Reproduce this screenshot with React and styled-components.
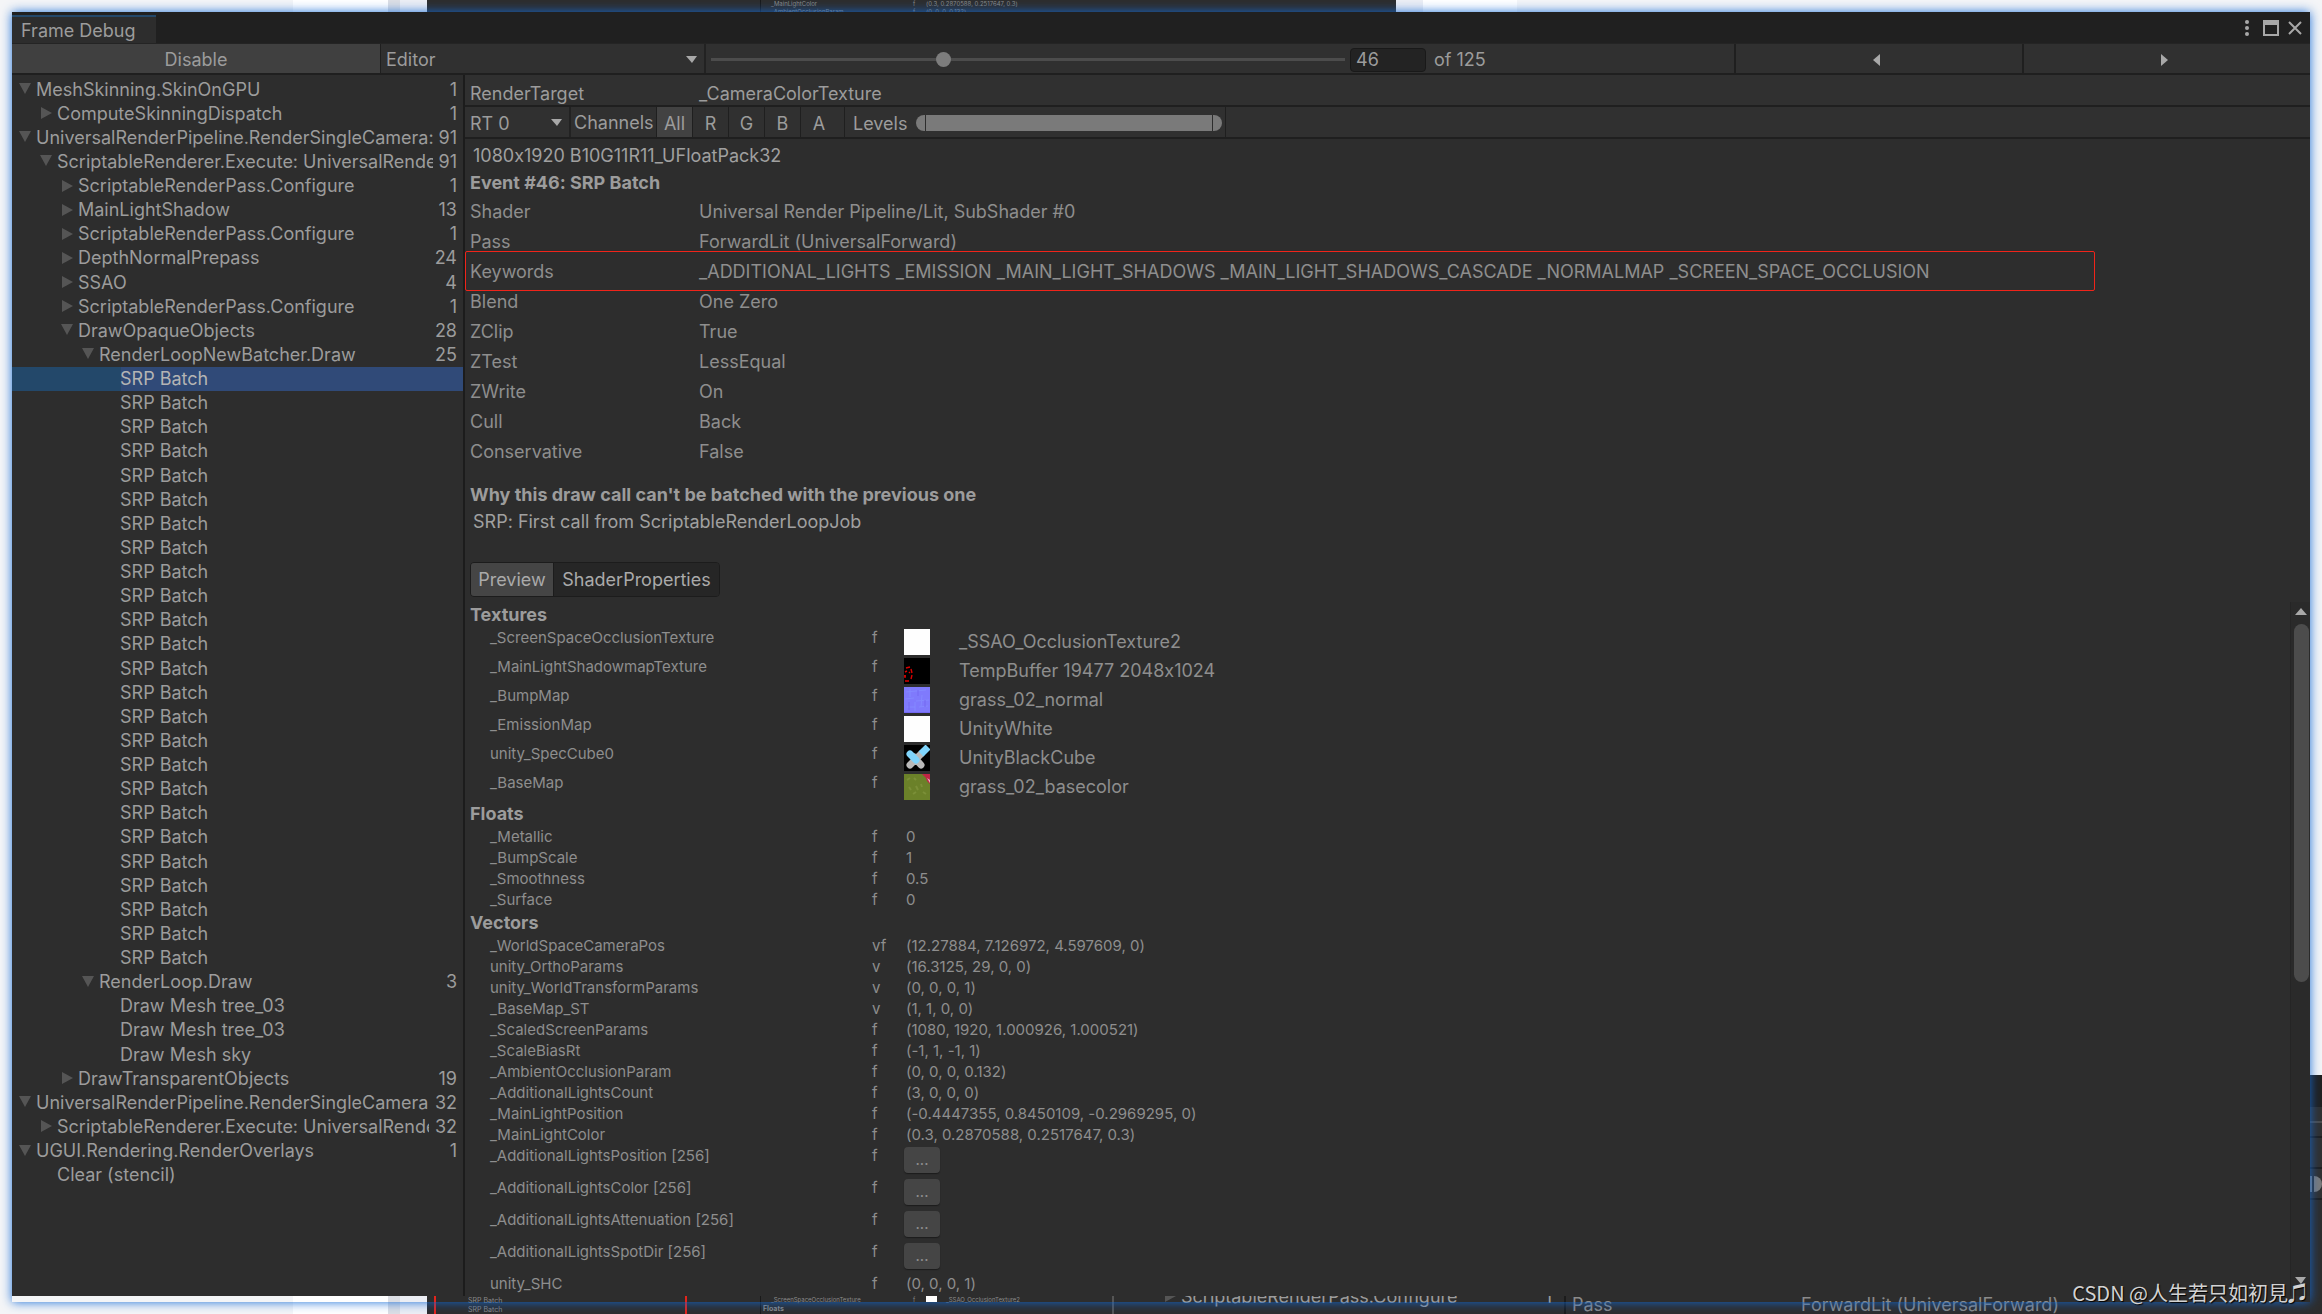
import React from "react";
import styled, { createGlobalStyle } from "styled-components";

const GlobalStyle = createGlobalStyle`
  * {
    box-sizing: border-box;
  }
  body {
    margin: 0;
    background-color: #f4f5f7;
    color: #9c9c9c;
    font-family: Inter, "Liberation Sans", sans-serif;
    font-size: 18px;
    font-feature-settings: "calt" 0;
  }
  button, input, select {
    font: inherit;
    font-feature-settings: inherit;
    color: inherit;
    border: none;
    border-radius: 0;
    padding: 0;
    margin: 0;
    outline: none;
  }
`;

const Page = styled.div`
  position: relative;
  min-height: 100vh;
  padding: 12px 12px 18px;
  overflow: hidden;
`;

/* ---- what lies behind the window ---- */

const Backdrop = styled.div`
  position: absolute;
  inset: 0;
  display: flex;
`;
const Stripe = styled.div`
  width: ${(p) => p.$width}px;
  background-color: ${(p) => p.$color};
`;
const BackWindow = styled.div`
  display: flex;
  flex-direction: column;
  justify-content: space-between;
  width: 969px;
  background-color: #2d2d2d;
  color: #8a8a8a;
  font-size: 7px;
  line-height: 9px;
`;
const BackStrip = styled.div`
  display: flex;
  height: 18px;
  overflow: hidden;
`;
const BackTree = styled.div`
  width: 334px;
  padding-left: 7px;
  border-right: 1px solid #191919;
`;
const BackHighlight = styled.div`
  width: 253px;
  height: 18px;
  padding-left: 32px;
  border: solid #e3241c;
  border-width: 0 2px;
`;
const BackProps = styled.div`
  padding-left: 2px;
`;
const BackRow = styled.div`
  display: grid;
  grid-template-columns: 142px 13px 20px auto;
  height: 8px;
  padding-left: 8px;
  font-size: 6px;
  line-height: 8px;
  white-space: nowrap;
`;
const BackSwatch = styled.i`
  width: 11px;
  height: 6px;
  background-color: #fff;
`;
const FrontWindow = styled.div`
  position: absolute;
  left: 1112px;
  right: 0;
  top: 1075px;
  bottom: 0;
  overflow: hidden;
  border-left: 2px solid #555;
  background-color: #2d2d2d;
  color: #8a8a8a;
`;
const FrontTitle = styled.div`
  height: 32px;
  background-color: #202020;
`;
const FrontBar = styled.div`
  display: flex;
  justify-content: flex-end;
  align-items: center;
  gap: 2px;
  height: 31px;
  background-color: #303030;
  border-bottom: 2px solid #1f1f1f;
`;
const FrontTrack = styled.div`
  width: 40px;
  height: 2px;
  background-color: #4c4c4c;
`;
const FrontLevel = styled.div`
  width: ${(p) => (p.$cap ? 8 : 40)}px;
  height: 16px;
  border-radius: ${(p) => (p.$cap ? "0 8px 8px 0" : "0")};
  background-color: #7a7a7a;
`;
const FrontBody = styled.div`
  display: grid;
  grid-template-columns: 452px 1fr;
`;
const FrontTree = styled.div`
  padding: 84px 6px 0 50px;
  border-right: 2px solid #1c1c1c;
`;
const FrontDetails = styled.div`
  display: grid;
  grid-template-columns: 229px auto;
  padding: 90px 0 0 6px;
  line-height: 30px;
`;

/* ---- the window ---- */

const Window = styled.div`
  position: relative;
  display: flex;
  flex-direction: column;
  min-height: calc(100vh - 30px);
  background-color: #2d2d2d;

  &::after {
    content: "";
    position: absolute;
    inset: 0 0 -6px;
    box-shadow: 0 0 10px rgba(18, 104, 214, 0.95);
    pointer-events: none;
  }
`;
const TitleBar = styled.div`
  display: flex;
  justify-content: space-between;
  align-items: flex-end;
  height: 31px;
  background-color: #202020;
`;
const Tab = styled.div`
  width: 144px;
  height: 28px;
  padding-left: 9px;
  line-height: 28px;
  border-top: 2px solid #23486a;
  background-color: #2d2d2d;
`;
const WindowButtons = styled.div`
  display: flex;
  align-items: center;
  gap: 4px;
  height: 31px;
  padding-right: 5px;
`;
const IconButton = styled.button`
  display: flex;
  align-items: center;
  justify-content: center;
  width: 20px;
  height: 20px;
  background: none;
`;
const Toolbar = styled.div`
  display: flex;
  height: 32px;
  background-color: #303030;
  border-top: 1px solid #242424;
  border-bottom: 2px solid #1f1f1f;
`;
const DisableButton = styled.button`
  width: 369px;
  padding-top: 2px;
  background-color: #404040;
  border-right: 1px solid #1f1f1f;
`;
const SelectBox = styled.div`
  position: relative;
  width: ${(p) => p.$width}px;
  border-right: 2px solid #222;

  svg {
    position: absolute;
    right: ${(p) => p.$arrow}px;
    top: 12px;
    pointer-events: none;
  }
`;
const Select = styled.select`
  appearance: none;
  width: 100%;
  height: 100%;
  padding: 2px 0 0 5px;
  background-color: transparent;
`;
const SliderGroup = styled.div`
  display: flex;
  align-items: center;
  flex: 1;
  padding: 2px 0 0 5px;
`;
const Slider = styled.input`
  appearance: none;
  flex: 1;
  height: 16px;
  background: none;

  &::-webkit-slider-runnable-track {
    height: 3px;
    background-color: #4c4c4c;
  }
  &::-webkit-slider-thumb {
    appearance: none;
    width: 15px;
    height: 15px;
    margin-top: -6px;
    border-radius: 50%;
    background-color: #7d7d7d;
  }
`;
const FrameInput = styled.input`
  width: 76px;
  height: 24px;
  margin-left: 5px;
  padding-left: 5px;
  border: 1px solid #191919;
  border-radius: 4px;
  background-color: #232323;
`;
const FrameCount = styled.span`
  width: 308px;
  padding-left: 8px;
`;
const StepButton = styled.button`
  width: 288px;
  padding-top: 2px;
  background: none;
  border-left: 2px solid #1f1f1f;
`;

const Body = styled.div`
  display: flex;
  flex: 1;
`;

const Tree = styled.ul`
  display: flex;
  flex-direction: column;
  justify-content: space-between;
  width: 453px;
  margin: 0;
  padding: 2px 0 109px;
  border-right: 2px solid #1c1c1c;
  list-style: none;
`;
const TreeRow = styled.li`
  display: flex;
  align-items: center;
  height: 24px;
  padding-right: 6px;
  padding-left: ${(p) => 7 + p.$level * 21}px;
  white-space: nowrap;
  color: ${(p) => (p.$selected ? "#b4b4b4" : "#9c9c9c")};
  background: ${(p) =>
    p.$selected
      ? "linear-gradient(to right, #23486a 109px, #304a78 109px)"
      : "none"};
`;
const Toggle = styled.span`
  display: flex;
  flex: none;
  width: 17px;
`;
const TreeName = styled.span`
  flex: 1;
  min-width: 0;
  overflow: hidden;
`;
const TreeCount = styled.span`
  padding-left: 6px;
`;

const Main = styled.div`
  flex: 1;
  min-width: 0;
  display: flex;
  flex-direction: column;
`;
const TargetBar = styled.div`
  display: grid;
  grid-template-columns: 229px auto;
  align-items: center;
  height: 32px;
  padding: 6px 0 0 5px;
  background-color: #303030;
  border-bottom: 2px solid #1f1f1f;
`;
const ChannelBar = styled.div`
  display: flex;
  height: 32px;
  background-color: #303030;
  border-bottom: 2px solid #1f1f1f;
`;
const ChannelLabel = styled.span`
  width: 86px;
  padding-left: 3px;
  line-height: 32px;
  border-right: 1px solid #1f1f1f;
`;
const ChannelButton = styled.button`
  width: 36px;
  padding-top: 2px;
  background-color: ${(p) => (p.$active ? "#424242" : "transparent")};
  border-right: ${(p) => (p.$last ? "none" : "1px solid #1f1f1f")};
`;
const Levels = styled.div`
  display: flex;
  align-items: center;
  width: 382px;
  margin-left: 7px;
  padding: 2px 3px 0 8px;
  border: solid #1f1f1f;
  border-width: 0 1px;
`;
const LevelsLabel = styled.span`
  width: 63px;
`;
const LevelRange = styled.input`
  appearance: none;
  flex: 1;
  min-width: 0;
  height: 16px;
  background-color: #7a7a7a;
  border-radius: ${(p) => (p.$high ? "0 8px 8px 0" : "8px 0 0 8px")};

  &::-webkit-slider-thumb {
    appearance: none;
    width: 10px;
    height: 16px;
    border: solid #2d2d2d;
    border-width: ${(p) => (p.$high ? "0 0 0 1px" : "0 1px 0 0")};
  }
`;

const Details = styled.div`
  padding: 3px 0 0;
`;
const Line = styled.p`
  margin: 0;
  padding-left: 8px;
  line-height: ${(p) => p.$height}px;
  color: #a0a0a0;
`;
const Heading = styled.h2`
  margin: 0;
  padding-left: 5px;
  font-size: 18px;
  font-weight: 700;
  line-height: ${(p) => p.$height}px;
`;
const StateList = styled.dl`
  margin: 1px 0 14px;
`;
const StateRow = styled.div`
  position: relative;
  display: grid;
  grid-template-columns: 229px auto;
  padding-left: 5px;
  line-height: 30px;
  color: #8e8e8e;

  dd {
    margin: 0;
  }
`;
const RedBox = styled.div`
  position: absolute;
  inset: -6px auto -4px 0;
  width: 1630px;
  max-width: 100%;
  border: 1px solid #f0241a;
  border-radius: 2px;
`;
const Tabs = styled.div`
  display: flex;
  width: 250px;
  height: 35px;
  margin: 27px 0 5px 5px;
  border: 1px solid #1c1c1c;
  border-radius: 4px;
  overflow: hidden;
`;
const TabButton = styled.button`
  width: ${(p) => p.$width}px;
  color: #aaa;
  background-color: ${(p) => (p.$raised ? "#454545" : "#262626")};
  border-right: ${(p) => (p.$raised ? "1px solid #1c1c1c" : "none")};
`;

const Scroll = styled.div`
  display: flex;
  flex: 1;
`;
const Properties = styled.div`
  flex: 1;
`;
const Table = styled.table`
  width: 100%;
  table-layout: fixed;
  border-collapse: collapse;
  font-size: 15px;
  line-height: 21px;
  color: #8e8e8e;

  th, td {
    padding: 0;
    font-weight: 400;
    text-align: left;
    vertical-align: top;
  }
  th {
    width: 407px;
    padding-left: 25px;
  }
  td.stage {
    width: 32px;
  }
`;
const Row = styled.tr`
  height: ${(p) => p.$height}px;
`;
const Value = styled.span`
  padding-left: 2px;
`;
const TextureValue = styled.div`
  display: flex;
  align-items: center;
  gap: 29px;
  height: 29px;
  font-size: 18px;

  svg {
    flex: none;
  }
`;
const MoreButton = styled.button`
  display: block;
  width: 36px;
  height: 26px;
  margin-top: 2px;
  line-height: 26px;
  border-radius: 4px;
  background-color: #454545;
  box-shadow: 0 1px 1px #1c1c1c;
`;
const ScrollBar = styled.div`
  display: flex;
  flex-direction: column;
  align-items: center;
  width: 20px;
  padding: 6px 0 7px 1px;
  background-color: #2a2a2a;
  border-left: 1px solid #252525;
`;
const ScrollThumb = styled.div`
  width: 15px;
  height: 358px;
  margin: 4px 0 auto;
  border-radius: 8px;
  background-color: #4c4c4c;
`;
const Watermark = styled.div`
  position: absolute;
  right: 14px;
  bottom: 6px;
  color: #d2d2d2;
  font-family: "Noto Sans CJK SC", sans-serif;
  font-size: 20px;
  line-height: 30px;
  text-shadow: 1px 1px 1px #000;
`;

const srpBatches = Array.from({ length: 25 }, (_, i) => ({
  level: 4,
  name: "SRP Batch",
  selected: i === 0,
}));

const tree = [
  { level: 0, name: "MeshSkinning.SkinOnGPU", count: 1, open: true },
  { level: 1, name: "ComputeSkinningDispatch", count: 1, open: false },
  { level: 0, name: "UniversalRenderPipeline.RenderSingleCamera:", count: 91, open: true },
  { level: 1, name: "ScriptableRenderer.Execute: UniversalRender", count: 91, open: true },
  { level: 2, name: "ScriptableRenderPass.Configure", count: 1, open: false },
  { level: 2, name: "MainLightShadow", count: 13, open: false },
  { level: 2, name: "ScriptableRenderPass.Configure", count: 1, open: false },
  { level: 2, name: "DepthNormalPrepass", count: 24, open: false },
  { level: 2, name: "SSAO", count: 4, open: false },
  { level: 2, name: "ScriptableRenderPass.Configure", count: 1, open: false },
  { level: 2, name: "DrawOpaqueObjects", count: 28, open: true },
  { level: 3, name: "RenderLoopNewBatcher.Draw", count: 25, open: true },
  ...srpBatches,
  { level: 3, name: "RenderLoop.Draw", count: 3, open: true },
  { level: 4, name: "Draw Mesh tree_03" },
  { level: 4, name: "Draw Mesh tree_03" },
  { level: 4, name: "Draw Mesh sky" },
  { level: 2, name: "DrawTransparentObjects", count: 19, open: false },
  { level: 0, name: "UniversalRenderPipeline.RenderSingleCamera", count: 32, open: true },
  { level: 1, name: "ScriptableRenderer.Execute: UniversalRende", count: 32, open: false },
  { level: 0, name: "UGUI.Rendering.RenderOverlays", count: 1, open: true },
  { level: 1, name: "Clear (stencil)" },
];

const states = [
  ["Shader", "Universal Render Pipeline/Lit, SubShader #0"],
  ["Pass", "ForwardLit (UniversalForward)"],
  [
    "Keywords",
    "_ADDITIONAL_LIGHTS _EMISSION _MAIN_LIGHT_SHADOWS _MAIN_LIGHT_SHADOWS_CASCADE _NORMALMAP _SCREEN_SPACE_OCCLUSION",
  ],
  ["Blend", "One Zero"],
  ["ZClip", "True"],
  ["ZTest", "LessEqual"],
  ["ZWrite", "On"],
  ["Cull", "Back"],
  ["Conservative", "False"],
];

const textures = [
  ["_ScreenSpaceOcclusionTexture", "white", "_SSAO_OcclusionTexture2"],
  ["_MainLightShadowmapTexture", "shadow", "TempBuffer 19477 2048x1024"],
  ["_BumpMap", "normal", "grass_02_normal"],
  ["_EmissionMap", "white", "UnityWhite"],
  ["unity_SpecCube0", "cube", "UnityBlackCube"],
  ["_BaseMap", "grass", "grass_02_basecolor"],
];

const floats = [
  ["_Metallic", "f", "0"],
  ["_BumpScale", "f", "1"],
  ["_Smoothness", "f", "0.5"],
  ["_Surface", "f", "0"],
];

const vectors = [
  ["_WorldSpaceCameraPos", "vf", "(12.27884, 7.126972, 4.597609, 0)"],
  ["unity_OrthoParams", "v", "(16.3125, 29, 0, 0)"],
  ["unity_WorldTransformParams", "v", "(0, 0, 0, 1)"],
  ["_BaseMap_ST", "v", "(1, 1, 0, 0)"],
  ["_ScaledScreenParams", "f", "(1080, 1920, 1.000926, 1.000521)"],
  ["_ScaleBiasRt", "f", "(-1, 1, -1, 1)"],
  ["_AmbientOcclusionParam", "f", "(0, 0, 0, 0.132)"],
  ["_AdditionalLightsCount", "f", "(3, 0, 0, 0)"],
  ["_MainLightPosition", "f", "(-0.4447355, 0.8450109, -0.2969295, 0)"],
  ["_MainLightColor", "f", "(0.3, 0.2870588, 0.2517647, 0.3)"],
  ["_AdditionalLightsPosition [256]", "f", null],
  ["_AdditionalLightsColor [256]", "f", null],
  ["_AdditionalLightsAttenuation [256]", "f", null],
  ["_AdditionalLightsSpotDir [256]", "f", null],
  ["unity_SHC", "f", "(0, 0, 0, 1)"],
];

const arrows = {
  down: "0,0 12,0 6,11",
  up: "0,7 12,7 6,0",
  right: "1,0 12,6 1,12",
  left: "7,0 0,6 7,12",
  next: "0,0 7,6 0,12",
  small: "0,0 11,0 6,7",
};

const Arrow = ({ shape, color = "#a8a8a8" }) => (
  <svg width="13" height="12">
    <polygon points={arrows[shape]} fill={color} />
  </svg>
);

const Thumbnail = ({ kind }) => (
  <svg width="26" height="26" viewBox="0 0 26 26">
    {kind === "white" && <rect width="26" height="26" fill="#fefefe" />}
    {kind === "shadow" && (
      <g fill="none" stroke="#d80000" strokeWidth="1.4">
        <rect width="26" height="26" fill="#000" stroke="none" />
        <path d="M2 10l4-1M7 11l1 4M8 17l-1 4M5 23l-4 0M1 20l0-3M1 14l2-1M5 14l1 1M0 18l2 0" />
      </g>
    )}
    {kind === "normal" && (
      <g stroke="#8488ff" strokeWidth="1">
        <rect width="26" height="26" fill="#7f7afc" stroke="none" />
        <path d="M2 5l20-2M1 12l9-1M12 14l13-1M3 20l8 0M15 20l9-1M6 2l0 8M18 8l-1 12M11 15l0 9" />
        <path d="M0 25.5h26M5 15v8M14 3v6M21 13v7" stroke="#7468f0" />
      </g>
    )}
    {kind === "cube" && (
      <g strokeWidth="7">
        <rect width="26" height="26" fill="#000" />
        <path d="M6 20L17 9M10 12l7 8" stroke="#b9b9b9" strokeLinecap="round" />
        <path d="M17 9l7-7" stroke="#7fd4fb" />
        <path d="M6 9l6 6" stroke="#7fd4fb" strokeLinecap="round" />
      </g>
    )}
    {kind === "grass" && (
      <g>
        <rect width="26" height="26" fill="#6b8129" />
        <path
          d="M3 6l3-2M10 4l2 2M5 13l2 3M12 12l2 4M17 10l1 3M9 20l3-2M19 18l3 2"
          stroke="#7b8f38"
          strokeWidth="2"
        />
        <path d="M18 0h8v10l-3-3-1-3z" fill="#c02545" />
        <path d="M23 4l3 2v3z" fill="#e7b3c4" />
      </g>
    )}
  </svg>
);

const Behind = () => (
  <Backdrop aria-hidden="true">
    <Stripe $width={293} $color="#f4f5f7" />
    <Stripe $width={95} $color="#ffffff" />
    <Stripe $width={12} $color="#dcdee4" />
    <Stripe $width={27} $color="#eceef4" />
    <BackWindow>
      <BackStrip>
        <BackTree />
        <BackProps>
          <BackRow>
            <span>_MainLightColor</span>
            <span>f</span>
            <span>(0.3, 0.2870588, 0.2517647, 0.3)</span>
          </BackRow>
          <BackRow>
            <span>_AmbientOcclusionParam</span>
            <span>f</span>
            <span>(0, 0, 0, 0.132)</span>
          </BackRow>
        </BackProps>
      </BackStrip>
      <BackStrip>
        <BackTree>
          <BackHighlight>
            SRP Batch
            <br />
            SRP Batch
          </BackHighlight>
        </BackTree>
        <BackProps>
          <BackRow>
            <span>_ScreenSpaceOcclusionTexture</span>
            <span>f</span>
            <BackSwatch />
            <span>_SSAO_OcclusionTexture2</span>
          </BackRow>
          <b>Floats</b>
        </BackProps>
      </BackStrip>
    </BackWindow>
    <Stripe $width={27} $color="#eceef4" />
    <Stripe $width={94} $color="#ffffff" />
    <FrontWindow>
      <FrontTitle />
      <FrontBar>
        <FrontTrack />
      </FrontBar>
      <FrontBar />
      <FrontBar>
        <FrontLevel />
        <FrontLevel $cap />
      </FrontBar>
      <FrontBody>
        <FrontTree>
          <TreeRow $level={-1} as="div">
            <Toggle>
              <Arrow shape="right" color="#555" />
            </Toggle>
            <TreeName>ScriptableRenderPass.Configure</TreeName>
            <TreeCount>1</TreeCount>
          </TreeRow>
        </FrontTree>
        <FrontDetails>
          <span>Pass</span>
          <span>ForwardLit (UniversalForward)</span>
        </FrontDetails>
      </FrontBody>
    </FrontWindow>
  </Backdrop>
);

const PropertyTable = ({ rows }) => (
  <Table>
    <tbody>
      {rows.map(([name, stage, value]) => (
        <Row key={name} $height={value ? 21 : 32}>
          <th scope="row">{name}</th>
          <td className="stage">{stage}</td>
          <td>
            {value ? (
              <Value>{value}</Value>
            ) : (
              <MoreButton aria-label={"Show " + name}>...</MoreButton>
            )}
          </td>
        </Row>
      ))}
    </tbody>
  </Table>
);

class App extends React.Component {
  state = {
    frame: 46,
    channel: "All",
    low: 0,
    high: 100,
  };

  onChangeFrame = (event) => {
    this.setState({ frame: Number(event.target.value) || 1 });
  };

  step = (amount) => {
    const frame = Math.min(125, Math.max(1, this.state.frame + amount));
    this.setState({ frame });
  };

  render() {
    const { frame, channel, low, high } = this.state;

    return (
      <Page>
        <GlobalStyle />
        <Behind />
        <Window>
          <TitleBar>
            <Tab>Frame Debug</Tab>
            <WindowButtons>
              <IconButton aria-label="Menu">
                <svg width="4" height="18" fill="#a8a8a8">
                  <circle cx="2" cy="3" r="2" />
                  <circle cx="2" cy="9" r="2" />
                  <circle cx="2" cy="15" r="2" />
                </svg>
              </IconButton>
              <IconButton aria-label="Maximize">
                <svg width="16" height="16" fill="none" stroke="#a8a8a8">
                  <rect x="1" y="1" width="14" height="14" strokeWidth="2" />
                  <path d="M0 3h16" strokeWidth="4" />
                </svg>
              </IconButton>
              <IconButton aria-label="Close">
                <svg width="14" height="14" stroke="#a8a8a8" strokeWidth="2">
                  <path d="M1 1l12 12M13 1L1 13" />
                </svg>
              </IconButton>
            </WindowButtons>
          </TitleBar>

          <Toolbar>
            <DisableButton>Disable</DisableButton>
            <SelectBox $width={325} $arrow={5}>
              <Select aria-label="Connection">
                <option>Editor</option>
              </Select>
              <Arrow shape="small" />
            </SelectBox>
            <SliderGroup>
              <Slider
                type="range"
                aria-label="Event"
                min="1"
                max="125"
                value={frame}
                onChange={this.onChangeFrame}
              />
              <FrameInput
                aria-label="Event number"
                value={frame}
                onChange={this.onChangeFrame}
              />
              <FrameCount>of 125</FrameCount>
            </SliderGroup>
            <StepButton aria-label="Previous" onClick={() => this.step(-1)}>
              <Arrow shape="left" />
            </StepButton>
            <StepButton aria-label="Next" onClick={() => this.step(1)}>
              <Arrow shape="next" />
            </StepButton>
          </Toolbar>

          <Body>
            <Tree>
              {tree.map((item, index) => (
                <TreeRow
                  key={index}
                  $level={item.level}
                  $selected={item.selected}
                >
                  <Toggle>
                    {item.open !== undefined && (
                      <Arrow
                        shape={item.open ? "down" : "right"}
                        color="#555"
                      />
                    )}
                  </Toggle>
                  <TreeName>{item.name}</TreeName>
                  <TreeCount>{item.count}</TreeCount>
                </TreeRow>
              ))}
            </Tree>

            <Main>
              <TargetBar>
                <span>RenderTarget</span>
                <span>_CameraColorTexture</span>
              </TargetBar>
              <ChannelBar>
                <SelectBox $width={106} $arrow={5}>
                  <Select aria-label="Render target">
                    <option>RT 0</option>
                  </Select>
                  <Arrow shape="small" />
                </SelectBox>
                <ChannelLabel>Channels</ChannelLabel>
                {["All", "R", "G", "B", "A"].map((name) => (
                  <ChannelButton
                    key={name}
                    $active={name === channel}
                    $last={name === "A"}
                    onClick={() => this.setState({ channel: name })}
                  >
                    {name}
                  </ChannelButton>
                ))}
                <Levels>
                  <LevelsLabel id="levels">Levels</LevelsLabel>
                  <LevelRange
                    type="range"
                    aria-labelledby="levels"
                    value={low}
                    onChange={(e) => this.setState({ low: e.target.value })}
                  />
                  <LevelRange
                    type="range"
                    aria-labelledby="levels"
                    $high
                    value={high}
                    onChange={(e) => this.setState({ high: e.target.value })}
                  />
                </Levels>
              </ChannelBar>

              <Details>
                <Line $height={28}>1080x1920 B10G11R11_UFloatPack32</Line>
                <Heading $height={26}>Event #46: SRP Batch</Heading>
                <StateList>
                  {states.map(([name, value]) => (
                    <StateRow key={name}>
                      <dt>{name}</dt>
                      <dd>
                        {value}
                        {name === "Keywords" && <RedBox />}
                      </dd>
                    </StateRow>
                  ))}
                </StateList>
                <Heading $height={28}>
                  Why this draw call can't be batched with the previous one
                </Heading>
                <Line $height={26}>
                  SRP: First call from ScriptableRenderLoopJob
                </Line>
                <Tabs>
                  <TabButton $width={83} $raised>
                    Preview
                  </TabButton>
                  <TabButton $width={165}>ShaderProperties</TabButton>
                </Tabs>
              </Details>

              <Scroll>
                <Properties>
                  <Heading $height={25}>Textures</Heading>
                  <Table>
                    <tbody>
                      {textures.map(([name, kind, value]) => (
                        <Row key={name} $height={29}>
                          <th scope="row">{name}</th>
                          <td className="stage">f</td>
                          <td>
                            <TextureValue>
                              <Thumbnail kind={kind} />
                              {value}
                            </TextureValue>
                          </td>
                        </Row>
                      ))}
                    </tbody>
                  </Table>
                  <Heading $height={25}>Floats</Heading>
                  <PropertyTable rows={floats} />
                  <Heading $height={25}>Vectors</Heading>
                  <PropertyTable rows={vectors} />
                </Properties>
                <ScrollBar>
                  <Arrow shape="up" />
                  <ScrollThumb />
                  <Arrow shape="small" />
                </ScrollBar>
              </Scroll>
            </Main>
          </Body>
        </Window>
        <Watermark>CSDN @人生若只如初見♫</Watermark>
      </Page>
    );
  }
}

export default App;
